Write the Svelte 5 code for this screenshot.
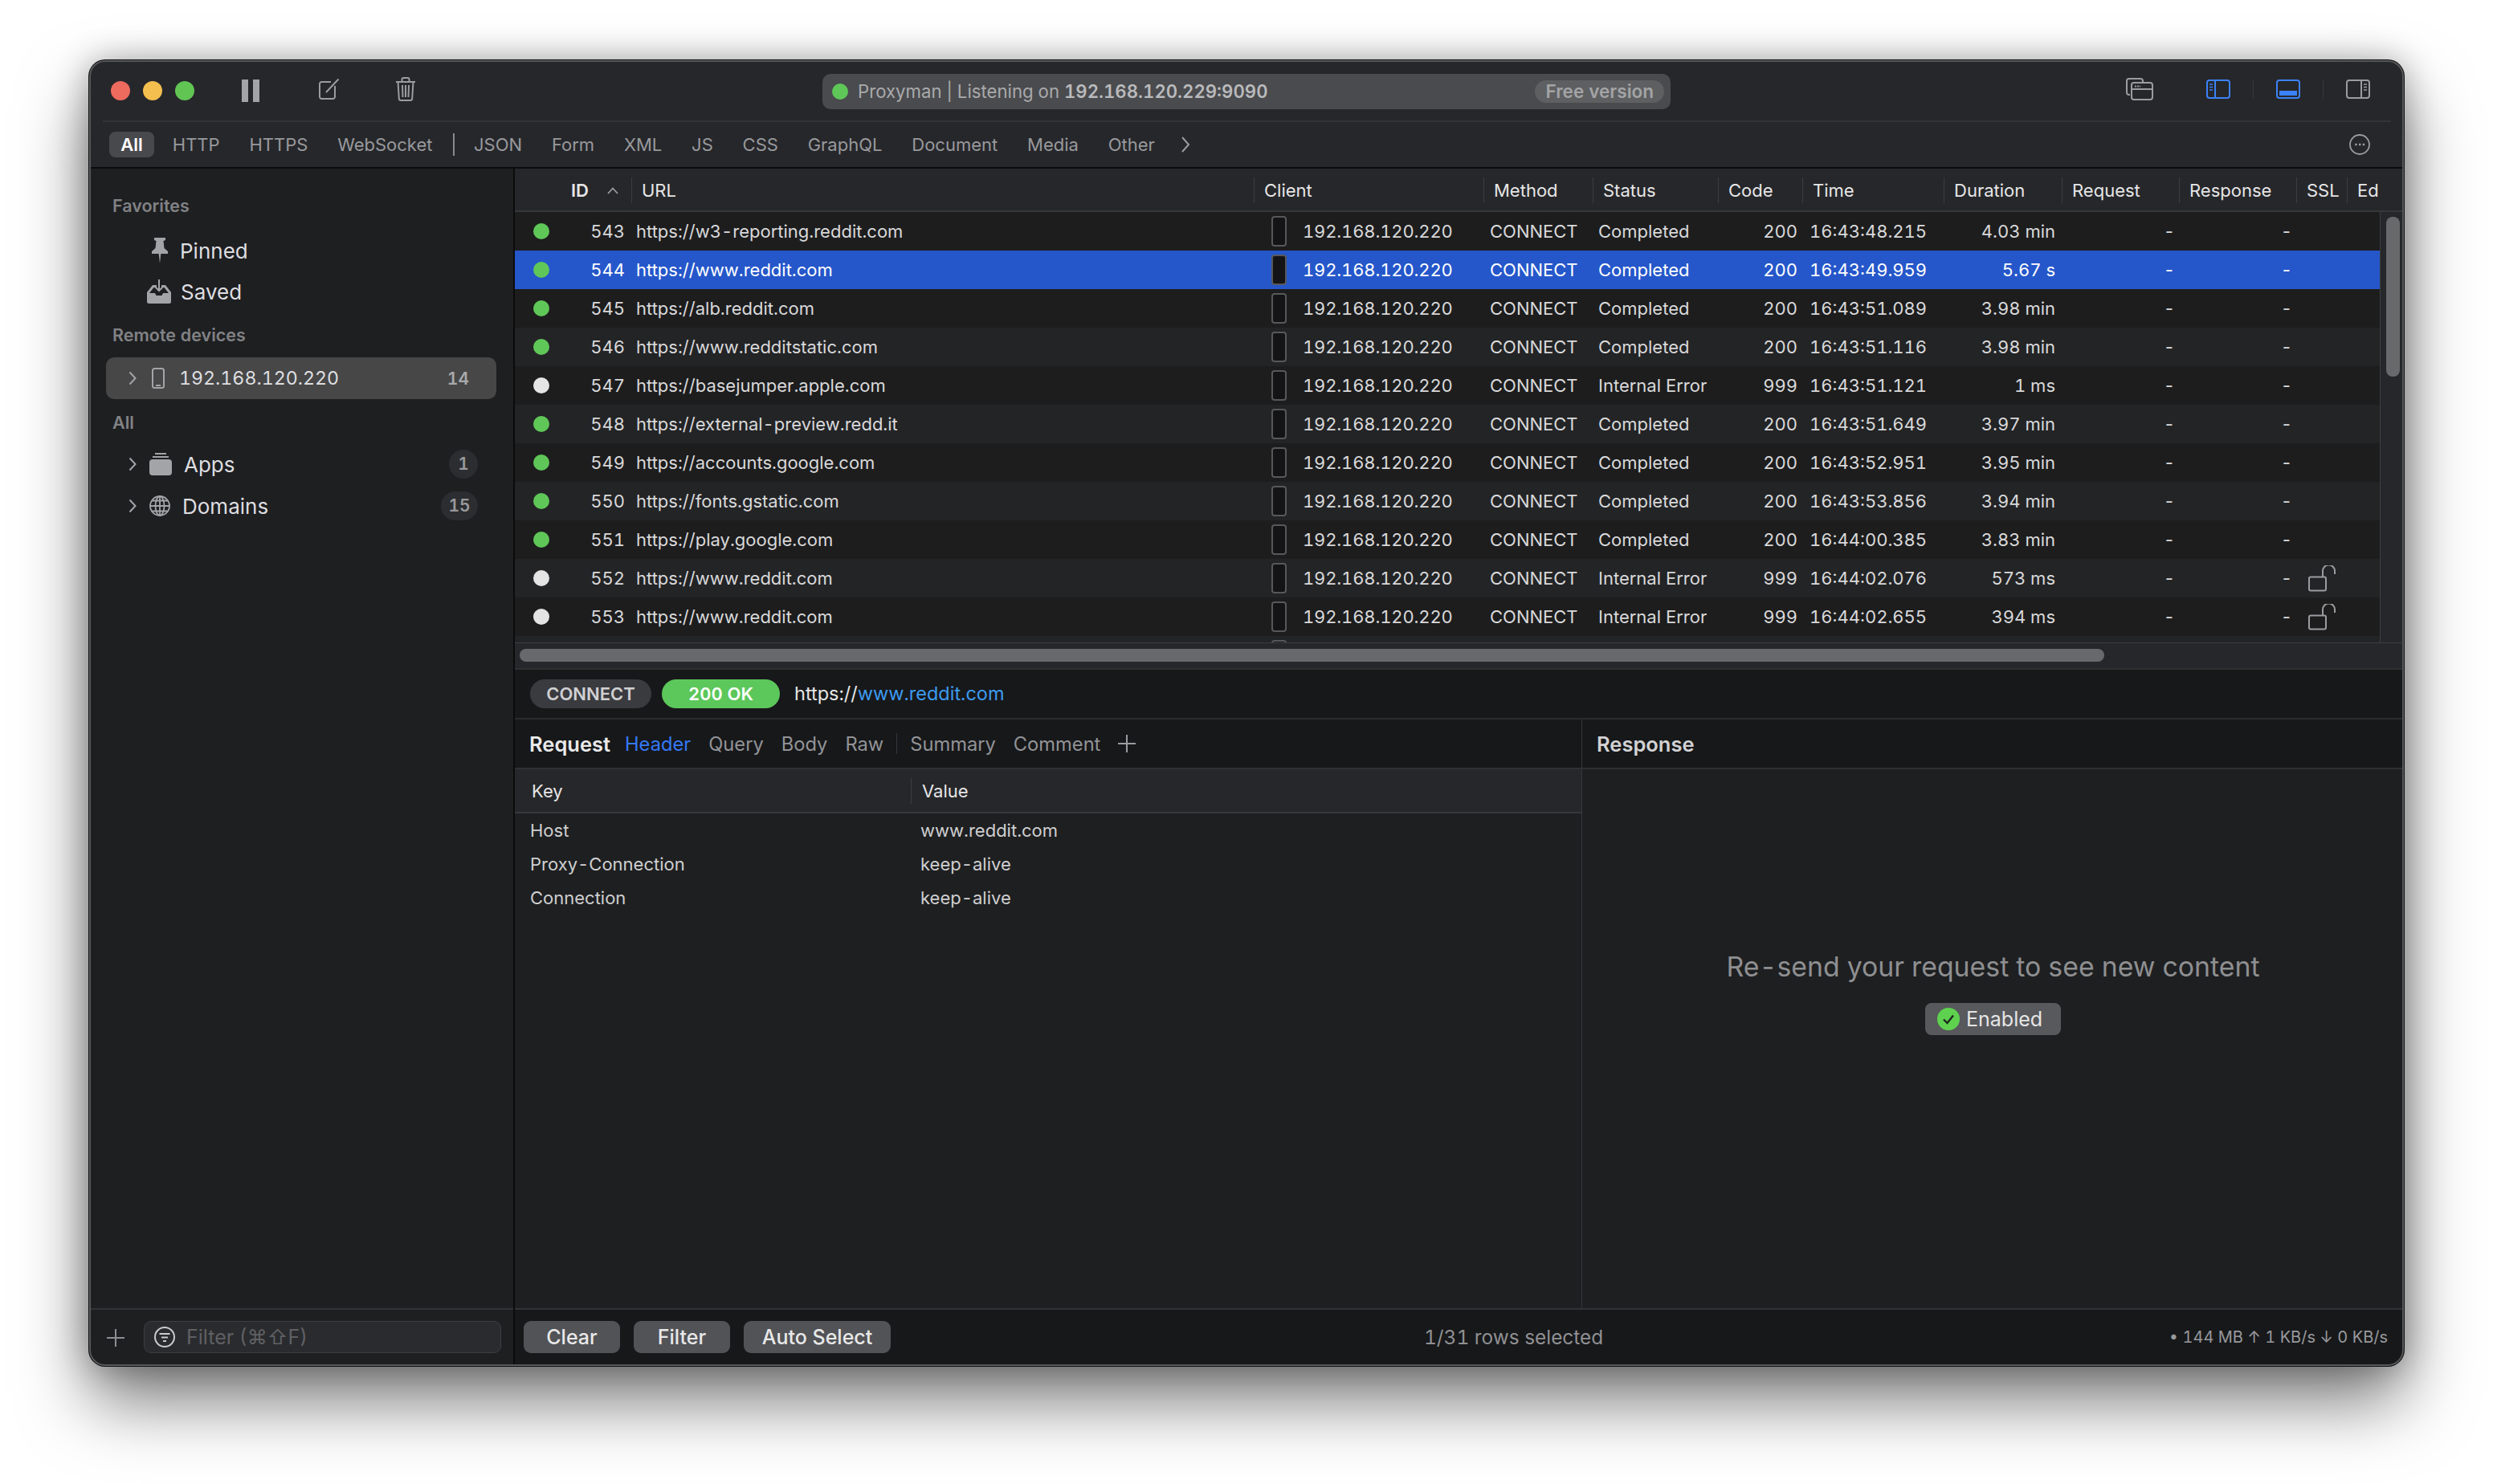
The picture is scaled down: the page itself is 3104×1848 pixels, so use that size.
<script lang="ts">
	// Proxyman main window: traffic table on top, request/response split below.
	type Row = { id: number; url: string; status: string; code: number; time: string; dur: string; lock?: boolean };

	const rows: Row[] = [
		{ id: 543, url: 'https://w3-reporting.reddit.com', status: 'Completed', code: 200, time: '16:43:48.215', dur: '4.03 min' },
		{ id: 544, url: 'https://www.reddit.com', status: 'Completed', code: 200, time: '16:43:49.959', dur: '5.67 s' },
		{ id: 545, url: 'https://alb.reddit.com', status: 'Completed', code: 200, time: '16:43:51.089', dur: '3.98 min' },
		{ id: 546, url: 'https://www.redditstatic.com', status: 'Completed', code: 200, time: '16:43:51.116', dur: '3.98 min' },
		{ id: 547, url: 'https://basejumper.apple.com', status: 'Internal Error', code: 999, time: '16:43:51.121', dur: '1 ms' },
		{ id: 548, url: 'https://external-preview.redd.it', status: 'Completed', code: 200, time: '16:43:51.649', dur: '3.97 min' },
		{ id: 549, url: 'https://accounts.google.com', status: 'Completed', code: 200, time: '16:43:52.951', dur: '3.95 min' },
		{ id: 550, url: 'https://fonts.gstatic.com', status: 'Completed', code: 200, time: '16:43:53.856', dur: '3.94 min' },
		{ id: 551, url: 'https://play.google.com', status: 'Completed', code: 200, time: '16:44:00.385', dur: '3.83 min' },
		{ id: 552, url: 'https://www.reddit.com', status: 'Internal Error', code: 999, time: '16:44:02.076', dur: '573 ms', lock: true },
		{ id: 553, url: 'https://www.reddit.com', status: 'Internal Error', code: 999, time: '16:44:02.655', dur: '394 ms', lock: true },
		{ id: 554, url: '', status: '', code: 0, time: '', dur: '' }
	];

	const tabs = ['HTTP', 'HTTPS', 'WebSocket', '|', 'JSON', 'Form', 'XML', 'JS', 'CSS', 'GraphQL', 'Document', 'Media', 'Other'];
	const cols = ['URL', 'Client', 'Method', 'Status', 'Code', 'Time', 'Duration', 'Request', 'Response', 'SSL', 'Ed'];
	const headers = [
		['Host', 'www.reddit.com'],
		['Proxy-Connection', 'keep-alive'],
		['Connection', 'keep-alive']
	];
</script>

<div class="page">
<div class="window">
	<header class="titlebar">
		<div class="left">
			<div class="lights">
				<i class="red"></i><i class="yellow"></i><i class="green"></i>
			</div>
			<svg class="pause" width="22" height="28" viewBox="0 0 22 28"><path fill="#a3a4a7" d="M0 0h8v28H0zM14 0h8v28h-8z" /></svg>
			<svg class="compose" width="26" height="28" viewBox="0 0 26 28" fill="none" stroke="#9b9c9f" stroke-width="2">
				<path d="M15 5H3.500A2.500 2.500 0 0 0 1 7.500v16A2.500 2.500 0 0 0 3.500 26h14a2.500 2.500 0 0 0 2.500-2.500V10" />
				<path d="M9 18 24.500 1.500" />
			</svg>
			<svg class="trash" width="26" height="30" viewBox="0 0 26 30" fill="none" stroke="#9b9c9f" stroke-width="2">
				<path d="M1 6h24M8.500 6V3a2 2 0 0 1 2-2h5a2 2 0 0 1 2 2v3M3.500 6l1.300 20.500A2.500 2.500 0 0 0 7.300 29h11.400a2.500 2.500 0 0 0 2.500-2.500L22.500 6M9 10l.5 15M13 10v15M17 10l-.5 15" />
			</svg>
		</div>
		<div class="status-pill">
			<i class="dot"></i>
			<span>Proxyman | Listening on <b>192.168.120.229:9090</b></span>
			<span class="free">Free version</span>
		</div>
		<div class="right">
			<svg class="stack" width="34" height="28" viewBox="0 0 34 28" fill="none" stroke="#9b9c9f" stroke-width="2">
				<path d="M5 21H4a3 3 0 0 1-3-3V4a3 3 0 0 1 3-3h14a3 3 0 0 1 3 3v1" />
				<rect x="7" y="6" width="26" height="21" rx="3" />
				<path d="M7 14h26" />
				<path d="M11 10.500h7" stroke-dasharray="2 1" />
			</svg>
			<svg class="panel" width="30" height="24" viewBox="0 0 30 24" fill="none" stroke="#3b82f6" stroke-width="2">
				<rect x="1" y="1" width="28" height="22" rx="3" />
				<path d="M11 1v22" />
				<path d="M4 6h4M4 9.500h4M4 13h4" stroke-width="1.500" />
			</svg>
			<em></em>
			<svg class="panel" width="30" height="24" viewBox="0 0 30 24" fill="none" stroke="#3b82f6" stroke-width="2">
				<rect x="1" y="1" width="28" height="22" rx="3" />
				<path fill="#3b82f6" stroke="none" d="M4 14h22v6H4z" />
			</svg>
			<em></em>
			<svg class="panel" width="30" height="24" viewBox="0 0 30 24" fill="none" stroke="#9b9c9f" stroke-width="2">
				<rect x="1" y="1" width="28" height="22" rx="3" />
				<path d="M19 1v22" />
				<path d="M22 6h4M22 9.500h4M22 13h4" stroke-width="1.500" />
			</svg>
		</div>
	</header>

	<nav class="tabs">
		<span class="all">All</span>
		{#each tabs as t}
			{#if t === '|'}
				<i class="bar"></i>
			{:else}
				<span>{t}</span>
			{/if}
		{/each}
		<svg class="more" width="12" height="20" viewBox="0 0 12 20" fill="none" stroke="#9b9c9f" stroke-width="2"><path d="m2 1 8 9-8 9" /></svg>
		<svg class="dots" width="26" height="26" viewBox="0 0 26 26" fill="none" stroke="#9b9c9f" stroke-width="1.800">
			<circle cx="13" cy="13" r="12" />
			<path stroke-dasharray="2.400 2.400" stroke-width="2.600" d="M7.200 13h12" />
		</svg>
	</nav>

	<div class="body">
		<aside class="sidebar">
			<div class="side-scroll">
				<h4>Favorites</h4>
				<div class="item fav">
					<svg width="22" height="32" viewBox="0 0 22 32" fill="#a3a4a7">
						<path d="M4 0h14v3l-2.500 1 1 9 4.500 4v3H12.300l-1.300 12-1.300-12H1v-3l4.500-4 1-9L4 3z" />
					</svg>
					<span>Pinned</span>
				</div>
				<div class="item fav saved">
					<svg width="30" height="30" viewBox="0 0 30 30">
						<path fill="#a3a4a7" d="M7 7h5v3H8.500L3 17h7l1.500 3h7l1.500-3h7l-5.500-7H18V7h5l7 9v11.500A2.500 2.500 0 0 1 27.500 30h-25A2.500 2.500 0 0 1 0 27.500V16z" />
						<path fill="none" stroke="#a3a4a7" stroke-width="2" d="M15 0v13M10 9l5 5 5-5" />
					</svg>
					<span>Saved</span>
				</div>
				<h4 class="h-remote">Remote devices</h4>
				<div class="item device">
					<svg class="chev" width="10" height="18" viewBox="0 0 10 18" fill="none" stroke="#a3a4a7" stroke-width="2"><path d="m1.500 1.500 7 7.500-7 7.500" /></svg>
					<svg class="ph" width="16" height="26" viewBox="0 0 16 26" fill="none" stroke="#a3a4a7" stroke-width="2">
						<rect x="1" y="1" width="14" height="24" rx="2.500" />
						<path d="M5 22h6" />
					</svg>
					<span class="ip">192.168.120.220</span>
					<b class="count">14</b>
				</div>
				<h4 class="h-all">All</h4>
				<div class="item group">
					<svg class="chev" width="10" height="18" viewBox="0 0 10 18" fill="none" stroke="#a3a4a7" stroke-width="2"><path d="m1.500 1.500 7 7.500-7 7.500" /></svg>
					<svg width="28" height="28" viewBox="0 0 28 28" fill="#a3a4a7">
						<path d="M7 0h14v2H7zM4 4h20v2H4z" />
						<rect y="8" width="28" height="20" rx="4" />
					</svg>
					<span>Apps</span>
					<b class="badge">1</b>
				</div>
				<div class="item group domains">
					<svg class="chev" width="10" height="18" viewBox="0 0 10 18" fill="none" stroke="#a3a4a7" stroke-width="2"><path d="m1.500 1.500 7 7.500-7 7.500" /></svg>
					<svg width="26" height="26" viewBox="0 0 26 26" fill="none" stroke="#a3a4a7" stroke-width="1.800">
						<circle cx="13" cy="13" r="12" />
						<ellipse cx="13" cy="13" rx="5.500" ry="12" />
						<path d="M13 1v24M1 13h24M3 6.500h20M3 19.500h20" />
					</svg>
					<span>Domains</span>
					<b class="badge wide">15</b>
				</div>
			</div>
			<div class="side-foot">
				<svg width="22" height="22" viewBox="0 0 22 22" stroke="#8d8e91" stroke-width="2"><path d="M11 0v22M0 11h22" /></svg>
				<div class="search">
					<svg width="26" height="26" viewBox="0 0 26 26" fill="none" stroke="#c9cacc" stroke-width="2">
						<circle cx="13" cy="13" r="12" />
						<path d="M6.500 9h13M9 13.500h8M11 18h4" />
					</svg>
					<span>Filter (⌘⇧F)</span>
				</div>
			</div>
		</aside>

		<main class="main">
			<section class="table">
				<div class="thead">
					<div class="th first">
						<span>ID</span>
						<svg width="14" height="9" viewBox="0 0 14 9" fill="none" stroke="#9b9c9f" stroke-width="1.800"><path d="m1 8 6-6.500L13 8" /></svg>
					</div>
					{#each cols as c}
						<div class="th">{c}</div>
					{/each}
				</div>
				<div class="viewport">
					<div class="rows">
						{#each rows as r}
							<div class="row" class:even={r.id % 2 === 0} class:sel={r.id === 544}>
								<div class="c-id">
									<i class="st" class:err={r.code === 999}></i>
									{#if r.url}<span>{r.id}</span>{/if}
								</div>
								<div class="c-url">{r.url}</div>
								<div class="c-client">
									<i class="phone"></i>
									{#if r.url}<span>192.168.120.220</span>{/if}
								</div>
								{#if r.url}
									<div class="c-method">CONNECT</div>
									<div class="c-status">{r.status}</div>
									<div class="c-num code">{r.code}</div>
									<div class="c-time">{r.time}</div>
									<div class="c-num">{r.dur}</div>
									<div class="c-num dash">-</div>
									<div class="c-num dash">-</div>
									<div class="c-ssl">
										{#if r.lock}
											<svg width="34" height="33" viewBox="0 0 34 33" fill="none" stroke="#9b9c9f" stroke-width="2">
												<rect x="1" y="14.500" width="21" height="17" rx="2" />
												<path d="M18 14V7a7.500 7.500 0 0 1 15 0v4" />
											</svg>
										{/if}
									</div>
								{/if}
							</div>
						{/each}
					</div>
					<div class="vscroll"><i></i></div>
				</div>
				<div class="hscroll"><i></i></div>
			</section>

			<div class="summary">
				<span class="pill method">CONNECT</span>
				<span class="pill ok">200 OK</span>
				<span class="addr">https://<a href="#top">www.reddit.com</a></span>
			</div>

			<div class="split">
				<section class="req">
					<div class="bar-tabs">
						<b>Request</b>
						<span class="on">Header</span>
						<span>Query</span>
						<span>Body</span>
						<span>Raw</span>
						<i></i>
						<span>Summary</span>
						<span>Comment</span>
						<svg width="22" height="22" viewBox="0 0 22 22" stroke="#9b9c9f" stroke-width="2"><path d="M11 0v22M0 11h22" /></svg>
					</div>
					<div class="kv-head">
						<div>Key</div>
						<div>Value</div>
					</div>
					<div class="kv">
						{#each headers as [k, v]}
							<div class="kv-row"><span>{k}</span><span>{v}</span></div>
						{/each}
					</div>
				</section>
				<section class="res">
					<div class="bar-tabs"><b>Response</b></div>
					<div class="empty">
						<p>Re-send your request to see new content</p>
						<div class="enabled">
							<svg width="28" height="28" viewBox="0 0 28 28">
								<circle cx="14" cy="14" r="14" fill="#5ed24f" />
								<path d="m8 14.500 4.500 4.500L20 9.500" fill="none" stroke="#1f2a1f" stroke-width="2.400" />
							</svg>
							<span>Enabled</span>
						</div>
					</div>
				</section>
			</div>

			<footer class="foot">
				<button>Clear</button>
				<button>Filter</button>
				<button>Auto Select</button>
				<span class="selected">1/31 rows selected</span>
				<span class="stats">• 144 MB ↑ 1 KB/s ↓ 0 KB/s</span>
			</footer>
		</main>
	</div>
</div>
</div>

<style>
	:global(body) {
		margin: 0;
		background: #fff;
	}

	.page {
		height: 1848px;
		box-sizing: border-box;
		padding: 75px 0 0 111px;
		overflow: hidden;
	}

	.window {
		--cols: 145px 775px 286px 136px 156px 105px 176px 147px 146px 146px 63px 70px;
		position: relative;
		box-sizing: border-box;
		width: 2882px;
		height: 1626px;
		border-radius: 20px;
		background: #26272b;
		overflow: hidden;
		display: flex;
		flex-direction: column;
		font-family: Inter, 'Liberation Sans', sans-serif;
		font-size: 22px;
		font-variant-numeric: tabular-nums;
		color: #d9d9da;
		-webkit-font-smoothing: antialiased;
		box-shadow:
			0 0 0 1px #111,
			0 44px 86px rgba(0, 0, 0, 0.52),
			0 0 42px rgba(0, 0, 0, 0.3);
	}

	/* thin light rim over the window contents */
	.window::after {
		content: '';
		position: absolute;
		inset: 0;
		border: 2px solid #57585a;
		border-radius: 20px;
		pointer-events: none;
	}

	.titlebar {
		flex: none;
		height: 77px;
		display: flex;
		align-items: center;
		padding-bottom: 2px;
		box-sizing: border-box;
	}

	.left {
		width: 913px;
		flex: none;
		display: flex;
		align-items: center;
	}

	.lights {
		display: flex;
		gap: 16px;
		margin-left: 27px;
	}

	.lights i {
		width: 24px;
		height: 24px;
		border-radius: 50%;
	}

	.red { background: #ed6a5e; }
	.yellow { background: #f4bf4f; }
	.green { background: #61c554; }

	.pause { margin-left: 59px; }
	.compose { margin-left: 74px; margin-top: -4px; }
	.trash { margin-left: 69px; margin-top: -4px; }

	.status-pill {
		width: 1056px;
		height: 44px;
		flex: none;
		box-sizing: border-box;
		padding: 0 8px 0 12px;
		border-radius: 10px;
		background: #4a4b4e;
		color: #a9aaac;
		display: flex;
		align-items: center;
		gap: 12px;
		font-size: 22.2px;
		margin-top: 2px;
	}

	.status-pill b {
		font-weight: 600;
		color: #b9babc;
	}

	.dot {
		width: 20px;
		height: 20px;
		border-radius: 50%;
		background: #5fc758;
	}

	.free {
		margin-left: auto;
		padding: 0 13px;
		height: 28px;
		line-height: 28px;
		border-radius: 14px;
		background: #5e5f61;
		font-weight: 600;
		font-size: 22.5px;
		color: #a3a4a6;
	}

	.right {
		flex: 1;
		display: flex;
		align-items: center;
		padding-left: 567px;
		margin-top: -4px;
	}

	.stack { margin-right: 66px; }

	.right em {
		width: 1px;
		height: 24px;
		margin: 0 28px;
		background: #37383b;
	}

	.tabs {
		flex: none;
		height: 58px;
		box-sizing: border-box;
		border-bottom: 2px solid #0b0b0c;
		display: flex;
		align-items: center;
		gap: 36.8px;
		padding: 0 42px 0 25px;
		color: #98999c;
		position: relative;
	}

	.tabs::before {
		content: '';
		position: absolute;
		top: -2px;
		left: 17px;
		right: 16px;
		height: 2px;
		background: #323336;
	}

	.all {
		width: 56px;
		height: 32px;
		line-height: 32px;
		text-align: center;
		border-radius: 8px;
		background: #48494d;
		color: #fff;
		font-weight: 600;
		margin-right: -14px;
	}

	.bar {
		width: 2px;
		height: 28px;
		background: #8a8b8e;
		margin: 0 -13px 0 -11px;
	}

	.more { margin-left: -5px; }
	.dots { margin-left: auto; }

	.body {
		flex: 1;
		display: flex;
		min-height: 0;
	}

	.sidebar {
		width: 530px;
		flex: none;
		box-sizing: border-box;
		border-right: 2px solid #0b0b0c;
		background: #1e1f21;
		display: flex;
		flex-direction: column;
	}

	.side-scroll {
		flex: 1;
		padding: 0 21px;
	}

	h4 {
		margin: 34px 0 0 8px;
		height: 24px;
		line-height: 24px;
		font-size: 21.5px;
		font-weight: 600;
		color: #818285;
	}

	h4.h-remote { margin-top: 16px; }
	h4.h-all { margin-top: 17px; }

	.item {
		display: flex;
		align-items: center;
		height: 52px;
		font-size: 26px;
		color: #dedee0;
	}

	.fav {
		margin-top: 18px;
		padding-left: 56px;
		gap: 14px;
		height: 52px;
	}

	.fav.saved {
		margin-top: -1px;
		padding-left: 51px;
		gap: 12px;
	}

	.device {
		height: 52px;
		margin-top: 16px;
		padding: 0 34px 0 28px;
		border-radius: 10px;
		background: #474747;
	}

	.device .ph { margin: 0 18px 0 19px; }
	.ip { font-size: 23.2px; }

	.chev { flex: none; }

	.count {
		margin-left: auto;
		font-size: 21px;
		font-weight: 600;
		color: #a8a9ab;
	}

	.group {
		padding: 0 23px 0 28px;
		margin-top: 14px;
	}

	.group svg:nth-child(2) { margin: 0 15px 0 16px; }

	.domains { margin-top: 0; }
	.domains svg:nth-child(2) { margin: 0 15px 0 16px; }

	.badge {
		margin-left: auto;
		width: 36px;
		height: 36px;
		line-height: 36px;
		border-radius: 18px;
		text-align: center;
		background: #2c2d30;
		font-size: 21px;
		font-weight: 600;
		color: #98999c;
	}

	.badge.wide { width: 46px; }

	.side-foot {
		flex: none;
		height: 72px;
		box-sizing: border-box;
		border-top: 2px solid #323336;
		padding: 0 15px 0 22px;
		display: flex;
		align-items: center;
		gap: 24px;
	}

	.search {
		flex: 1;
		height: 40px;
		box-sizing: border-box;
		border: 1px solid #3d3e40;
		border-radius: 9px;
		background: #2a2b2e;
		display: flex;
		align-items: center;
		gap: 14px;
		padding-left: 12px;
		color: #5f6063;
		font-size: 25px;
		margin-top: -3px;
	}

	.main {
		flex: 1;
		min-width: 0;
		display: flex;
		flex-direction: column;
		background: #17181a;
	}

	.table {
		flex: none;
		background: #26272a;
		border-bottom: 2px solid #2f3032;
	}

	.thead {
		height: 54px;
		box-sizing: border-box;
		border-bottom: 2px solid #36373a;
		display: grid;
		grid-template-columns: var(--cols);
		align-items: center;
		color: #e6e6e7;
	}

	.th {
		height: 32px;
		line-height: 32px;
		margin-top: 2px;
		padding-left: 12px;
		border-left: 1px solid #3c3d40;
		white-space: nowrap;
		overflow: hidden;
	}

	.th.first {
		border-left: 0;
		padding-left: 70px;
		display: flex;
		align-items: center;
		gap: 23px;
		font-weight: 600;
	}

	.viewport {
		height: 537px;
		box-sizing: border-box;
		border-bottom: 1px solid #3d3e40;
		display: flex;
		overflow: hidden;
	}

	.rows {
		width: 2322px;
		flex: none;
		border-right: 1px solid #3d3e40;
		overflow: hidden;
	}

	.row {
		height: 48px;
		display: grid;
		grid-template-columns: var(--cols);
		align-items: center;
		background: #1d1d1e;
		white-space: nowrap;
	}

	.row.even { background: #232426; }
	.row.sel { background: #2557ca; color: #fff; }

	.c-id {
		display: flex;
		align-items: center;
		justify-content: space-between;
		padding: 0 8px 0 23px;
	}

	.st {
		width: 20px;
		height: 20px;
		border-radius: 50%;
		background: #5fc758;
	}

	.st.err { background: #e4e4e4; }

	.c-url { padding-left: 6px; }

	.c-client {
		display: flex;
		align-items: center;
		gap: 20px;
		padding-left: 22px;
		letter-spacing: -0.15px;
	}

	.phone {
		flex: none;
		width: 19px;
		height: 38px;
		box-sizing: border-box;
		border: 2px solid #57585a;
		border-radius: 4px;
		background: #141416;
	}

	.c-method { padding-left: 8px; }
	.c-status { padding-left: 7px; }
	.c-time { padding-left: 9px; }
	.c-num { padding-right: 8px; text-align: right; }
	.c-num.code { padding-right: 6px; }
	.c-num.dash { padding-right: 5px; }
	.c-ssl { padding-left: 15px; display: flex; }

	.vscroll {
		flex: 1;
		padding: 6px 5px 0 7px;
	}

	.vscroll i {
		display: block;
		height: 199px;
		border-radius: 8px;
		background: #68696b;
	}

	.hscroll {
		height: 31px;
		box-sizing: border-box;
		padding: 7px 0 0 6px;
	}

	.hscroll i {
		display: block;
		width: 1973px;
		height: 16px;
		border-radius: 8px;
		background: #68696b;
	}

	.summary {
		flex: none;
		height: 62px;
		box-sizing: border-box;
		border-bottom: 2px solid #2a2b2d;
		display: flex;
		align-items: center;
		padding-left: 19px;
		gap: 13px;
	}

	.pill {
		height: 36px;
		line-height: 36px;
		border-radius: 18px;
		text-align: center;
		font-weight: 600;
		margin-top: -1px;
	}

	.pill.method { width: 151px; background: #3a3b3f; color: #d0d0d2; }
	.pill.ok { width: 147px; background: #5cc75a; color: #fff; }

	.addr {
		margin-left: 5px;
		margin-top: -1px;
		font-size: 23.5px;
		color: #e5e5e6;
	}

	.addr a {
		color: #3d9bf0;
		text-decoration: none;
	}

	.split {
		flex: 1;
		min-height: 0;
		display: flex;
		background: #1e1f21;
	}

	.req {
		width: 1329px;
		flex: none;
		box-sizing: border-box;
		border-right: 1px solid #36373a;
	}

	.res {
		flex: 1;
		min-width: 0;
		display: flex;
		flex-direction: column;
	}

	.bar-tabs {
		height: 62px;
		box-sizing: border-box;
		border-bottom: 2px solid #2f3032;
		background: #17181a;
		display: flex;
		align-items: center;
		gap: 22px;
		padding-left: 18px;
		color: #929396;
		font-size: 23.7px;
	}

	.bar-tabs b {
		font-weight: 600;
		font-size: 25.5px;
		color: #e9e9ea;
	}

	.res .bar-tabs b { color: #d2d2d4; }

	.bar-tabs .on { color: #3478f6; margin-left: -4px; }

	.bar-tabs i {
		width: 1px;
		height: 26px;
		background: #35363a;
		margin: 0 -6px;
	}

	.kv-head {
		height: 55px;
		box-sizing: border-box;
		border-bottom: 2px solid #36373a;
		background: #26272a;
		display: grid;
		grid-template-columns: 493px 1fr;
		align-items: center;
		color: #e6e6e7;
	}

	.kv-head div {
		height: 32px;
		line-height: 32px;
		padding-left: 21px;
	}

	.kv-head div + div {
		padding-left: 13px;
		border-left: 1px solid #3c3d40;
	}

	.kv-row {
		height: 42px;
		display: grid;
		grid-template-columns: 493px 1fr;
		align-items: center;
		color: #cfcfd0;
	}

	.kv-row span:first-child { padding-left: 19px; }
	.kv-row span:last-child { padding-left: 12px; }

	.empty {
		flex: 1;
		display: flex;
		flex-direction: column;
		align-items: center;
		padding-top: 226px;
	}

	.empty p {
		margin: 0;
		font-size: 33.8px;
		line-height: 40px;
		color: #8e8f91;
	}

	.enabled {
		margin-top: 25px;
		width: 169px;
		height: 40px;
		border-radius: 8px;
		background: #58595c;
		display: flex;
		align-items: center;
		gap: 8px;
		padding-left: 15px;
		box-sizing: border-box;
		color: #e5e5e6;
		font-size: 25px;
	}

	.foot {
		flex: none;
		height: 72px;
		box-sizing: border-box;
		border-top: 2px solid #323336;
		padding: 0 20px 3px 11px;
		display: flex;
		align-items: center;
		gap: 17px;
		position: relative;
	}

	button {
		font: inherit;
		font-size: 25px;
		font-weight: 500;
		height: 40px;
		padding: 0;
		border: 0;
		border-radius: 9px;
		background: #525356;
		color: #e8e8e9;
		width: 120px;
	}

	button:last-of-type { width: 183px; }

	.selected {
		margin-left: 647px;
		color: #8f9092;
		font-size: 24.4px;
	}

	.stats {
		margin-left: auto;
		font-size: 20px;
		color: #98999c;
	}
</style>
